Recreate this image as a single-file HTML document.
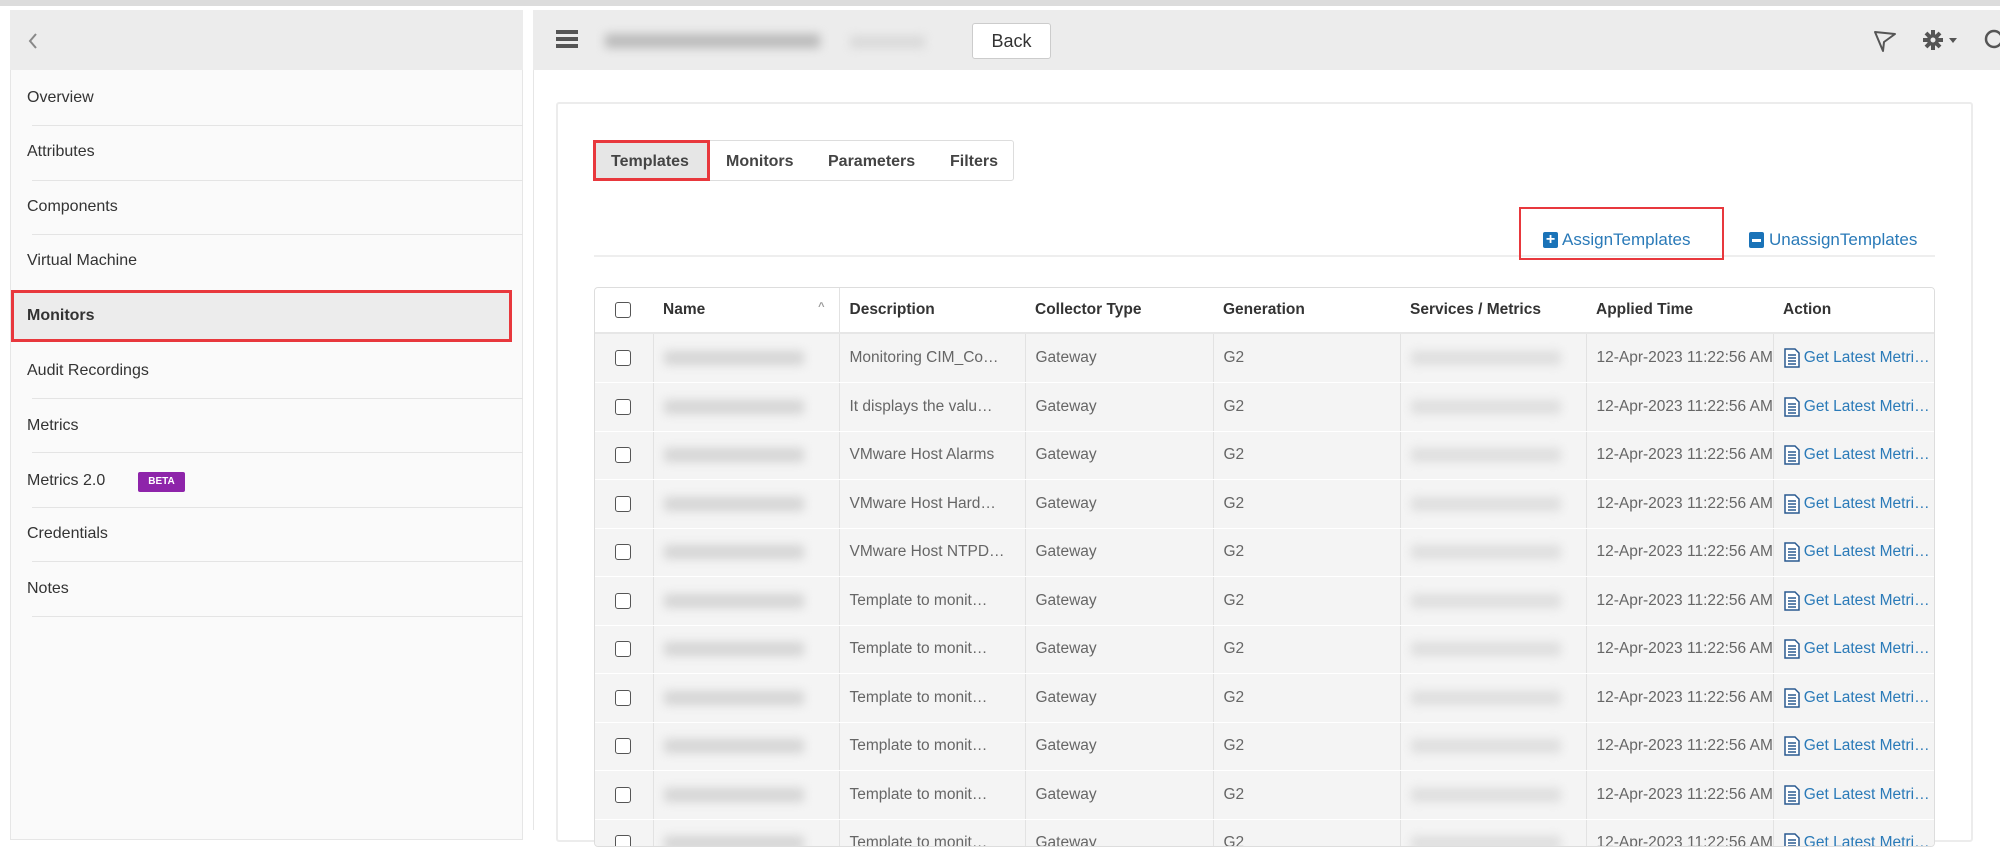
<!DOCTYPE html>
<html><head><meta charset="utf-8"><style>
*{box-sizing:border-box;margin:0;padding:0}
body{width:2000px;height:830px;overflow:hidden;background:#fff;font-family:"Liberation Sans",sans-serif;color:#333;position:relative}
.abs{position:absolute}
.topline{left:0;top:0;width:2000px;height:6px;background:#dcdcdc}
.side{left:10px;top:10px;width:513px;height:830px;background:#fafafa;border:1px solid #e6e6e6}
.sidehead{left:10px;top:10px;width:513px;height:60px;background:#ececec}
.item{position:absolute;left:27px;font-size:16px;color:#333}
.div{position:absolute;left:32px;width:491px;height:1px;background:#e4e4e4}
.main{left:533px;top:10px;width:1467px;height:820px;background:#fff;border-left:1px solid #e6e6e6}
.mainhead{left:533px;top:10px;width:1467px;height:60px;background:#ececec}
.card{left:556px;top:102px;width:1417px;height:740px;border:2px solid #ececec;border-radius:3px;background:#fff}
.blur{position:absolute;background:#bbb;filter:blur(5px);opacity:.6;height:12px}
table{border-collapse:collapse;font-size:15.5px;table-layout:fixed}
td,th{height:48.5px;border-left:1px solid #e2e2e2;padding-left:10px;white-space:nowrap;overflow:hidden;text-overflow:clip;text-align:left}
th{font-weight:bold;color:#333;height:45px;background:#fff}
tr.r td{background:#f4f4f4;border-bottom:1px solid #fff;color:#666}
tr.r td.link{color:#2a7ab8}
.cb{display:inline-block;width:16px;height:16px;border:1.5px solid #555;border-radius:3px;background:#fff;vertical-align:middle}
.link{color:#2a7ab8}
</style></head><body>
<div class="abs topline"></div>
<div class="abs side"></div>
<div class="abs sidehead"></div>
<svg class="abs" style="left:26px;top:32px" width="14" height="18"><path d="M10 2 L4 9 L10 16" stroke="#888" stroke-width="2" fill="none"/></svg>
<div class="item" style="top:89px">Overview</div>
<div class="div" style="top:125px"></div>
<div class="item" style="top:143px">Attributes</div>
<div class="div" style="top:180px"></div>
<div class="item" style="top:198px">Components</div>
<div class="div" style="top:234px"></div>
<div class="item" style="top:252px">Virtual Machine</div>
<div class="abs" style="left:11px;top:290px;width:501px;height:52px;background:#ececec;border:3px solid #e8383d"></div>
<div class="item" style="top:307px;font-weight:bold">Monitors</div>
<div class="item" style="top:362px">Audit Recordings</div>
<div class="div" style="top:398px"></div>
<div class="item" style="top:417px">Metrics</div>
<div class="div" style="top:452px"></div>
<div class="item" style="top:472px">Metrics 2.0</div>
<div class="abs" style="left:138px;top:472px;width:47px;height:20px;background:#8e24aa;border-radius:2px;color:#fff;font-size:10px;font-weight:bold;text-align:center;line-height:20px">BETA</div>
<div class="div" style="top:507px"></div>
<div class="item" style="top:525px">Credentials</div>
<div class="div" style="top:561px"></div>
<div class="item" style="top:580px">Notes</div>
<div class="div" style="top:616px"></div>

<div class="abs main"></div>
<div class="abs mainhead"></div>
<div class="abs" style="left:556px;top:30px;width:22px;height:4px;background:#555;box-shadow:0 7px 0 #555,0 14px 0 #555"></div>
<div class="blur" style="left:605px;top:34px;width:215px;height:14px;background:#999"></div>
<div class="blur" style="left:850px;top:36px;width:75px;background:#ccc"></div>
<div class="abs" style="left:972px;top:23px;width:79px;height:36px;background:#fff;border:1px solid #ccc;border-radius:3px;font-size:18px;text-align:center;line-height:34px;color:#333">Back</div>
<svg class="abs" style="left:1872px;top:28px" width="26" height="26"><path d="M3 4 L23 6 L12 14 L11 23 Z" stroke="#555" stroke-width="2" fill="none" stroke-linejoin="round"/></svg>
<svg class="abs" style="left:1922px;top:28px" width="40" height="24"><circle cx="11" cy="12" r="6" fill="#555"/><g stroke="#555" stroke-width="4"><line x1="11" y1="2" x2="11" y2="22"/><line x1="1" y1="12" x2="21" y2="12"/><line x1="4" y1="5" x2="18" y2="19"/><line x1="18" y1="5" x2="4" y2="19"/></g><circle cx="11" cy="12" r="2.5" fill="#ececec"/><path d="M27 10 L35 10 L31 15Z" fill="#555"/></svg>
<svg class="abs" style="left:1982px;top:28px" width="18" height="24"><circle cx="12" cy="11" r="8" stroke="#555" stroke-width="2.5" fill="none"/></svg>

<div class="abs card"></div>
<div class="abs" style="left:593px;top:140px;width:421px;height:41px;border:1px solid #ddd;border-radius:3px;background:#fff"></div>
<div class="abs" style="left:593px;top:140px;width:117px;height:41px;background:#e6e6e6;border:3px solid #e8383d"></div>
<div class="abs" style="left:611px;top:153px;font-size:16px;font-weight:bold;color:#444">Templates</div>
<div class="abs" style="left:726px;top:153px;font-size:16px;font-weight:bold;color:#444">Monitors</div>
<div class="abs" style="left:828px;top:153px;font-size:16px;font-weight:bold;color:#444">Parameters</div>
<div class="abs" style="left:950px;top:153px;font-size:16px;font-weight:bold;color:#444">Filters</div>

<div class="abs" style="left:594px;top:255px;width:1341px;height:2px;background:#eee"></div>
<div class="abs" style="left:1519px;top:207px;width:205px;height:53px;border:2px solid #e8383d"></div>
<div class="abs" style="left:1543px;top:232px;width:15px;height:16px;background:#1a73b8;border-radius:2px;color:#fff;font-size:16px;font-weight:bold;line-height:15px;text-align:center">+</div>
<div class="abs link" style="left:1562px;top:230px;font-size:17px">AssignTemplates</div>
<div class="abs" style="left:1749px;top:232px;width:15px;height:16px;background:#1a73b8;border-radius:2px"><div style="margin:7px 3px;height:3px;background:#fff"></div></div>
<div class="abs link" style="left:1769px;top:230px;font-size:17px">UnassignTemplates</div>

<div class="abs" style="left:594px;top:287px;width:1341px;height:560px;border:1.5px solid #ddd;border-radius:4px;overflow:hidden">
<table style="width:1341px">
<colgroup><col style="width:58px"><col style="width:186px"><col style="width:186px"><col style="width:188px"><col style="width:187px"><col style="width:186px"><col style="width:187px"><col style="width:163px"></colgroup>
<tr style="border-bottom:2px solid #e6e6e6"><th style="border-left:none;padding-left:20px"><span class="cb"></span></th><th style="border-left:none">Name <span style="float:right;margin-right:14px;color:#999;font-size:11px">^</span></th><th>Description</th><th style="border-left:none">Collector Type</th><th style="border-left:none">Generation</th><th style="border-left:none">Services / Metrics</th><th style="border-left:none">Applied Time</th><th style="border-left:none">Action</th></tr>
</table>
<table style="width:1341px" id="t">
<colgroup><col style="width:58px"><col style="width:186px"><col style="width:186px"><col style="width:188px"><col style="width:187px"><col style="width:186px"><col style="width:187px"><col style="width:163px"></colgroup>
</table>
</div>
<script>
var d=["Monitoring CIM_Co…","It displays the valu…","VMware Host Alarms","VMware Host Hard…","VMware Host NTPD…","Template to monit…","Template to monit…","Template to monit…","Template to monit…","Template to monit…","Template to monit…"];
var h="";
d.forEach(function(x,i){h+='<tr class="r"><td style="border-left:none;padding-left:20px"><span class="cb"></span></td><td><div style="width:140px;height:14px;background:#bbb;filter:blur(5px);opacity:.55"></div></td><td>'+x+'</td><td>Gateway</td><td>G2</td><td><div style="width:150px;height:14px;background:#ccc;filter:blur(5px);opacity:.55"></div></td><td>12-Apr-2023 11:22:56 AM</td><td class="link"><svg width="16" height="20" style="vertical-align:middle"><path d="M1 1h10l4 4v14H1z" fill="#fff" stroke="#2a5a90" stroke-width="1.5"/><g stroke="#2a5a90" stroke-width="1.5"><line x1="4" y1="7" x2="12" y2="7"/><line x1="4" y1="10" x2="12" y2="10"/><line x1="4" y1="13" x2="12" y2="13"/><line x1="4" y1="16" x2="12" y2="16"/></g></svg> Get Latest Metri…</td></tr>';});
document.getElementById("t").innerHTML+=h;
</script>
</body></html>
